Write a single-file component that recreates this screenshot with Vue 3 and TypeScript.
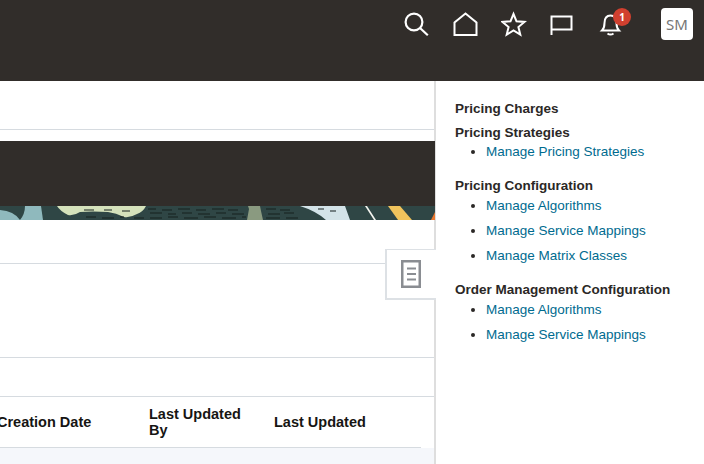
<script setup lang="ts">
const groups = [
  { title: 'Pricing Strategies', links: ['Manage Pricing Strategies'] },
  { title: 'Pricing Configuration', links: ['Manage Algorithms', 'Manage Service Mappings', 'Manage Matrix Classes'] },
  { title: 'Order Management Configuration', links: ['Manage Algorithms', 'Manage Service Mappings'] },
]

// Formes claires de la bannière décorative
const leaves = [
  { d: 'M0 0H41L43 14H0z', fill: '#8fb9bd' },
  { d: 'M0 0H25Q25 8 20 14Q14 5 0 4z', fill: '#2f4645' },
  { d: 'M57 0H146Q143 6 137 8Q130 12 124 11Q116 7 108 6Q92 5 80 6Q74 10 68 9Q60 5 57 0z', fill: '#d5e2bb' },
  { d: 'M247 14L249 3L248 0H260L261 5L263 14z', fill: '#8a9a80' },
  { d: 'M300 0H345L350 14H326Q316 5 300 0z', fill: '#d3e3e8' },
  { d: 'M365 0H367L376 14H374z', fill: '#f3f4ef' },
  { d: 'M388 0H400L412 14H398z', fill: '#f0c35c' },
  { d: 'M435 6V14H431z', fill: '#e9772f' },
]
</script>

<template>
  <div class="page">
    <!-- Barre du haut -->
    <header class="topbar">
      <button class="icon-btn search" aria-label="Search">
        <svg width="26" height="26" viewBox="0 0 26 26" fill="none" stroke="#fff" stroke-width="2.2">
          <circle cx="11" cy="11" r="8.4" />
          <path d="M17 17l7.8 7.300" />
        </svg>
      </button>
      <button class="icon-btn home" aria-label="Home">
        <svg width="26" height="26" viewBox="0 0 26 26" fill="none" stroke="#fff" stroke-width="2">
          <path d="M1.500 24V11.500L12.500 2.500l11 9V24z" />
        </svg>
      </button>
      <button class="icon-btn star" aria-label="Favorites">
        <svg width="26" height="26" viewBox="0 0 26 26" fill="none" stroke="#fff" stroke-width="2">
          <path d="M12.500 3l3 7.300 8 .6-6.100 5.100 1.900 7.600-6.800-4.100-6.800 4.100 1.900-7.600-6.100-5.100 8-.6z" />
        </svg>
      </button>
      <button class="icon-btn flag" aria-label="Recent">
        <svg width="26" height="26" viewBox="0 0 26 26" fill="none" stroke="#fff" stroke-width="2">
          <path d="M2.500 24V5.500h20v13H2.500" />
        </svg>
      </button>
      <button class="icon-btn bell" aria-label="Notifications">
        <svg width="26" height="26" viewBox="0 0 26 26" fill="none" stroke="#fff" stroke-width="2">
          <path d="M5 19.500c2-2 2.500-4 2.500-7.500C7.500 7 10 4.500 13.500 4.500S19.500 7 19.500 12c0 3.500.5 5.500 2.500 7.500z" />
          <path d="M10.500 22.500q3 2.200 6 0" />
        </svg>
        <span class="badge">1</span>
      </button>
      <span class="avatar">SM</span>
    </header>

    <div class="body">
      <!-- Contenu principal, coupé à gauche -->
      <main class="main">
        <div class="row row-top"></div>
        <div class="dark-band"></div>
        <div class="banner">
          <svg width="435" height="14" viewBox="0 0 435 14">
            <rect width="435" height="14" fill="#2f4645" />
            <path v-for="(l, i) in leaves" :key="i" :d="l.d" :fill="l.fill" />
            <path
              d="M84 4h10M104 4h8M122 5h8M148 3h8M162 4h10M178 3h12M196 4h10M212 3h12M228 4h10M266 3h10M280 4h10M150 7h12M168 8h8M182 7h10M198 8h12M216 7h10M232 8h12M268 8h12M284 7h10M86 11h10M102 12h12M120 11h4M134 12h10M150 12h12M168 11h10M184 12h14M204 11h12M222 12h14M242 11h4M266 12h14M286 12h12M318 3h6M330 5h6"
              stroke="#16211f"
              stroke-width="1.200"
              fill="none"
            />
          </svg>
        </div>
        <div class="row row-form"></div>
        <div class="row row-gap"></div>
        <div class="row row-tool"></div>
        <div class="table-head">
          <div class="cols">
            <span class="col-date">Creation Date</span>
            <span class="col-by">Last Updated By</span>
            <span>Last Updated</span>
          </div>
        </div>
        <div class="table-body"></div>
      </main>

      <!-- Panneau de tâches à droite -->
      <aside class="panel">
        <button class="panel-tab" aria-label="Tasks">
          <svg width="20" height="28" viewBox="0 0 20 28" fill="none" stroke="#8a8d92">
            <rect x="1.250" y="1.250" width="17.500" height="25.500" stroke-width="2.500" />
            <path d="M6 8.500h9M6 14h9M6 19.500h9" stroke-width="2" />
          </svg>
        </button>
        <h3 class="panel-title">Pricing Charges</h3>
        <section v-for="g in groups" :key="g.title" class="group">
          <h4>{{ g.title }}</h4>
          <ul>
            <li v-for="link in g.links" :key="link"><a>{{ link }}</a></li>
          </ul>
        </section>
      </aside>
    </div>
  </div>
</template>

<style scoped>
.page {
  width: 704px;
  height: 464px;
  overflow: hidden;
  display: flex;
  flex-direction: column;
  background: #fff;
  font-family: 'Liberation Sans', Arial, sans-serif;
  font-size: 14px;
  color: #161513;
}

.topbar {
  flex-shrink: 0;
  height: 81px;
  box-sizing: border-box;
  display: flex;
  align-items: flex-start;
  padding: 11px 11px 0 0;
  justify-content: flex-end;
  background: #312d2a;
}
.icon-btn {
  position: relative;
  width: 26px;
  height: 26px;
  padding: 0;
  border: 0;
  background: none;
  margin-right: 22px;
}
.icon-btn svg {
  display: block;
}
.search {
  margin-right: 24px;
}
.bell {
  margin-right: 38px;
}
.badge {
  position: absolute;
  top: -3px;
  right: -8px;
  width: 18px;
  height: 18px;
  border-radius: 50%;
  background: #d1402f;
  color: #fff;
  font-family: 'Noto Sans', sans-serif;
  font-size: 10px;
  font-weight: 700;
  line-height: 18px;
  text-align: center;
}
.avatar {
  width: 32px;
  height: 32px;
  margin-top: -3px;
  border-radius: 4px;
  background: #fff;
  color: #767676;
  font-family: 'Noto Sans', sans-serif;
  font-size: 15px;
  line-height: 32px;
  text-align: center;
}

.body {
  flex: 1;
  min-height: 0;
  display: flex;
}
.main {
  width: 434px;
  flex-shrink: 0;
  display: flex;
  flex-direction: column;
}
.row {
  box-sizing: border-box;
  border-bottom: 1px solid #d6dbe0;
}
.row-top {
  height: 49px;
}
.dark-band {
  position: relative;
  z-index: 1;
  height: 65px;
  margin: 11px -1px 0 0;
  background: #312d2a;
}
.banner {
  position: relative;
  z-index: 1;
  height: 14px;
  margin-right: -1px;
  overflow: hidden;
}
.banner svg {
  display: block;
}
.row-form {
  height: 44px;
}
.row-gap {
  height: 94px;
}
.row-tool {
  height: 39px;
}
.table-head {
  height: 51px;
  box-sizing: border-box;
  padding-right: 13px;
  display: flex;
}
.cols {
  flex: 1;
  display: flex;
  align-items: center;
  border-bottom: 1px solid #d6dbe0;
  font-size: 14.5px;
  font-weight: 700;
  line-height: 16px;
}
.col-date {
  width: 152px;
  margin-left: -3px;
  flex-shrink: 0;
  white-space: nowrap;
}
.col-by {
  width: 125px;
  flex-shrink: 0;
  padding-right: 24px;
  box-sizing: border-box;
}
.table-body {
  flex: 1;
  background: #f5f7fb;
}

.panel {
  position: relative;
  flex: 1;
  box-sizing: border-box;
  padding: 20px 0 0 19px;
  border-left: 2px solid #dedede;
  font-size: 13.5px;
}
.panel-tab {
  position: absolute;
  top: 168px;
  left: -51px;
  width: 51px;
  height: 51px;
  padding: 0 2px 0 0;
  display: flex;
  align-items: center;
  justify-content: center;
  box-sizing: border-box;
  background: #fff;
  border: 0;
  border-top: 1px solid #dde1e5;
  border-left: 2px solid #dde1e5;
  border-bottom: 2px solid #dde1e5;
}
.panel-title,
.group h4 {
  margin: 0;
  font-size: 13.5px;
  font-weight: 700;
  line-height: 16px;
  color: #2b2826;
}
.panel-title {
  margin-bottom: 8px;
}
.group {
  margin-bottom: 12px;
}
.group + .group h4 {
  margin-bottom: 1px;
}
.group ul {
  margin: 0;
  padding: 0 0 0 31px;
}
.group li {
  height: 25px;
  line-height: 22px;
}
.group li::marker {
  color: #2b2826;
}
.group li a {
  color: #006b8f;
}
</style>
